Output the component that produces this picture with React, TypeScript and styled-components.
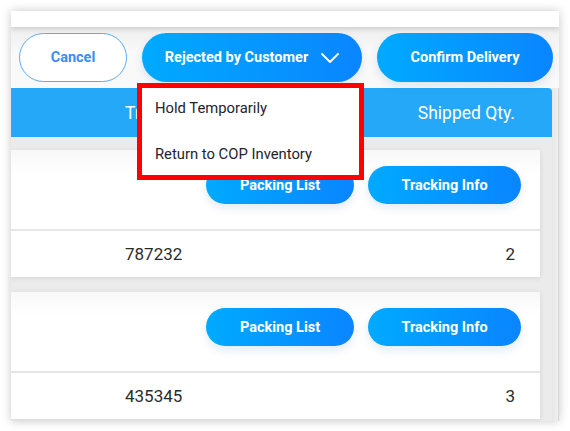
import React from "react";
import styled, { createGlobalStyle } from "styled-components";

const Global = createGlobalStyle`
  html, body { margin: 0; padding: 0; background: #ffffff; }
  body { font-family: Roboto, "Liberation Sans", Arial, sans-serif; }
  * { box-sizing: border-box; }
`;

const Page = styled.div`
  padding: 11px;
  width: 570px;
  height: 431px;
`;

const Panel = styled.div`
  width: 548px;
  height: 410px;
  display: flex;
  flex-direction: column;
  overflow: hidden;
  background: #f6f6f6;
  box-shadow: 0 0 9px rgba(0, 0, 0, 0.22);
`;

const TopStrip = styled.div`
  height: 16px;
  flex: none;
  background: #ffffff;
  box-shadow: 0 2px 5px rgba(0, 0, 0, 0.14);
  position: relative;
  z-index: 3;
`;

const Toolbar = styled.div`
  height: 61px;
  flex: none;
  display: flex;
  align-items: flex-start;
  gap: 15px;
  padding: 6px 0 0 8px;
  background: linear-gradient(#eeeeee, #f9f9f9 40%, #f9f9f9);
  position: relative;
  z-index: 2;
`;

const PillButton = styled.button<{ $variant?: "outline" | "solid"; $w: number; $h: number }>`
  width: ${(p) => p.$w}px;
  height: ${(p) => p.$h}px;
  flex: none;
  padding: 0;
  border-radius: 999px;
  font-family: Roboto, "Liberation Sans", Arial, sans-serif;
  font-size: 14.5px;
  font-weight: 700;
  display: flex;
  align-items: center;
  justify-content: center;
  gap: 13px;
  cursor: pointer;
  white-space: nowrap;
  ${(p) =>
    p.$variant === "outline"
      ? `
    background: #ffffff;
    color: #3a8ef0;
    border: 1.5px solid #5aaaf6;
  `
      : `
    background: linear-gradient(90deg, #00aaff, #0a85ff);
    color: #ffffff;
    border: none;
    box-shadow: 0 4px 10px rgba(0, 80, 160, 0.12);
  `}
`;

const Menu = styled.div`
  position: absolute;
  left: 126px;
  top: 56px;
  width: 227px;
  height: 97px;
  border: 5px solid #ff0000;
  background: #ffffff;
  display: flex;
  flex-direction: column;
  gap: 6px;
`;

const MenuItem = styled.div`
  padding: 10px 13px;
  line-height: 20px;
  font-size: 14.8px;
  color: #23232f;
`;

const Main = styled.div`
  flex: 1;
  display: flex;
  min-height: 0;
`;

const Content = styled.div`
  width: 541px;
  display: flex;
  flex-direction: column;
`;

const Header = styled.div`
  height: 49px;
  flex: none;
  background: #25a8f8;
  border-radius: 0 4px 0 0;
  display: flex;
  align-items: center;
  justify-content: space-between;
  padding: 0 37px 0 114px;
  color: #ffffff;
  font-size: 17.5px;
`;

const List = styled.div`
  flex: 1;
  background: #ebebeb;
  padding: 13px 12px 0 0;
  display: flex;
  flex-direction: column;
  gap: 15px;
`;

const Card = styled.div`
  background: #ffffff;
  flex: none;
  box-shadow: 0 1px 5px rgba(0, 0, 0, 0.1);
`;

const Actions = styled.div`
  display: flex;
  justify-content: flex-end;
  gap: 14px;
  padding: 16px 19px 25px;
  background: linear-gradient(#f8f8f8, #ffffff 30%);
`;

const Row = styled.div`
  height: 48px;
  border-top: 2px solid #e6e6e6;
  display: flex;
  align-items: center;
  justify-content: space-between;
  padding: 0 25px 0 114px;
  font-size: 17px;
  color: #2b2b2b;
`;

const Track = styled.div`
  width: 7px;
  background: linear-gradient(90deg, #e6e6e6, #f0f0f0);
  border-right: 1px solid #d6d6d6;
`;

const Chevron = () => (
  <svg width="18" height="10" viewBox="0 0 18 10" fill="none">
    <path d="M1 1 L9 9 L17 1" stroke="#ffffff" strokeWidth="1.8" strokeLinecap="round" strokeLinejoin="round" />
  </svg>
);

const shipments = [
  { tracking: "787232", qty: 2 },
  { tracking: "435345", qty: 3 },
];

export default function App() {
  return (
    <Page>
      <Global />
      <Panel>
        <TopStrip />
        <Toolbar>
          <PillButton $variant="outline" $w={108} $h={49}>
            Cancel
          </PillButton>
          <PillButton $variant="solid" $w={220} $h={49}>
            Rejected by Customer
            <Chevron />
          </PillButton>
          <PillButton $variant="solid" $w={176} $h={49}>
            Confirm Delivery
          </PillButton>
          <Menu>
            <MenuItem>Hold Temporarily</MenuItem>
            <MenuItem>Return to COP Inventory</MenuItem>
          </Menu>
        </Toolbar>
        <Main>
          <Content>
            <Header>
              <span>Tracking No.</span>
              <span>Shipped Qty.</span>
            </Header>
            <List>
              {shipments.map((s) => (
                <Card key={s.tracking}>
                  <Actions>
                    <PillButton $variant="solid" $w={148} $h={38}>
                      Packing List
                    </PillButton>
                    <PillButton $variant="solid" $w={153} $h={38}>
                      Tracking Info
                    </PillButton>
                  </Actions>
                  <Row>
                    <span>{s.tracking}</span>
                    <span>{s.qty}</span>
                  </Row>
                </Card>
              ))}
            </List>
          </Content>
          <Track />
        </Main>
      </Panel>
    </Page>
  );
}
